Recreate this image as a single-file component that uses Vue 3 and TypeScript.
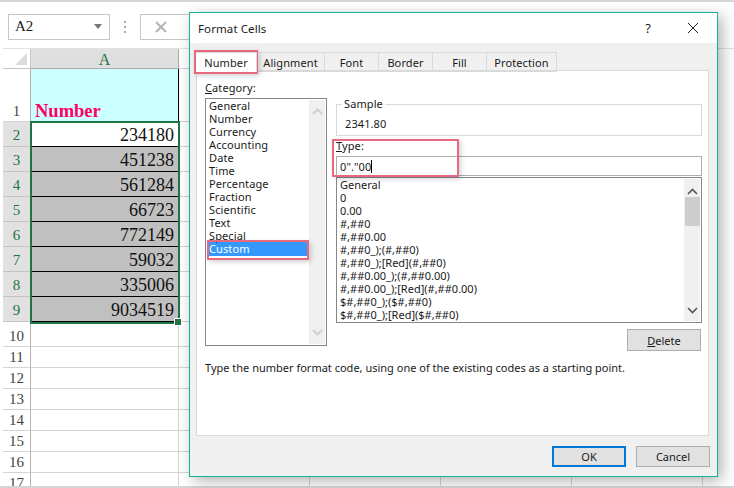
<script setup lang="ts">
interface SheetRow {
  no: number
  value?: string
  height: number
}

const values = ['234180', '451238', '561284', '66723', '772149', '59032', '335006', '9034519']

const rows: SheetRow[] = [
  { no: 1, height: 53 },
  ...values.map((value, i) => ({ no: i + 2, value, height: 25 })),
  { no: 10, height: 25 },
  ...[11, 12, 13, 14, 15, 16, 17].map((no) => ({ no, height: 21 })),
]

const tabs = ['Number', 'Alignment', 'Font', 'Border', 'Fill', 'Protection']
const categories = [
  'General', 'Number', 'Currency', 'Accounting', 'Date', 'Time', 'Percentage',
  'Fraction', 'Scientific', 'Text', 'Special', 'Custom',
]
const formats = [
  'General', '0', '0.00', '#,##0', '#,##0.00', '#,##0_);(#,##0)', '#,##0_);[Red](#,##0)',
  '#,##0.00_);(#,##0.00)', '#,##0.00_);[Red](#,##0.00)', '$#,##0_);($#,##0)', '$#,##0_);[Red]($#,##0)',
]
</script>

<template>
  <div class="page">
    <!-- formula bar -->
    <div class="toolbar">
      <div class="namebox">
        <span>A2</span>
        <i class="caret"></i>
      </div>
      <div class="dots"><b></b><b></b><b></b></div>
      <div class="fx">
        <svg width="12" height="12" viewBox="0 0 12 12"><path d="M1 1l10 10M11 1L1 11" stroke="#b4b4b4" stroke-width="2" /></svg>
      </div>
    </div>

    <!-- sheet -->
    <div class="sheet">
      <div class="grid-row head-row">
        <div class="corner"><i></i></div>
        <div class="col-a">A</div>
        <div v-for="n in 4" :key="n" class="rest"></div>
      </div>
      <div v-for="r in rows" :key="r.no" class="grid-row" :style="{ height: r.height + 'px' }">
        <div class="row-no" :class="{ on: r.value }">{{ r.no }}</div>
        <div class="cell" :class="{ title: r.no === 1, first: r.no === 2, filled: r.no > 2 && r.value }">
          <template v-if="r.no === 1">Number</template>
          <template v-else>{{ r.value }}</template>
        </div>
        <div v-for="n in 4" :key="n" class="rest"></div>
      </div>
      <div class="selection"><i></i></div>
    </div>

    <div class="bottom-line"></div>

    <!-- Format Cells window -->
    <div class="dialog">
      <div class="titlebar">
        <span>Format Cells</span>
        <div class="title-btns">
          <span class="help">?</span>
          <svg width="12" height="12" viewBox="0 0 12 12"><path d="M1 1l10 10M11 1L1 11" stroke="#222" stroke-width="1" fill="none" /></svg>
        </div>
      </div>
      <div class="dlg-body">
        <div class="tabs">
          <div v-for="(t, i) in tabs" :key="t" class="tab" :class="['tab-' + i, { active: i === 0 }]">{{ t }}</div>
        </div>
        <div class="panel">
          <div class="columns">
            <div class="left-col">
              <label><u>C</u>ategory:</label>
              <div class="listbox cat-list">
                <div class="items">
                  <div v-for="c in categories" :key="c" class="item" :class="{ picked: c === 'Custom' }">{{ c }}</div>
                </div>
                <div class="scroll">
                  <svg class="chev" width="11" height="7" viewBox="0 0 11 7"><path d="M1 6l4.5-4.5L10 6" stroke="#d0d0d0" stroke-width="2" fill="none" /></svg>
                  <svg class="chev" width="11" height="7" viewBox="0 0 11 7"><path d="M1 1l4.5 4.5L10 1" stroke="#d0d0d0" stroke-width="2" fill="none" /></svg>
                </div>
              </div>
            </div>
            <div class="right-col">
              <fieldset class="sample">
                <legend>Sample</legend>
                <div>2341.80</div>
              </fieldset>
              <label class="type-label"><u>T</u>ype:</label>
              <div class="type-input">0"."00<i class="cursor"></i></div>
              <div class="listbox fmt-list">
                <div class="items">
                  <div v-for="f in formats" :key="f" class="item">{{ f }}</div>
                </div>
                <div class="scroll">
                  <svg class="chev" width="11" height="7" viewBox="0 0 11 7"><path d="M1 6l4.5-4.5L10 6" stroke="#555" stroke-width="1.6" fill="none" /></svg>
                  <div class="thumb"></div>
                  <svg class="chev" width="11" height="7" viewBox="0 0 11 7"><path d="M1 1l4.5 4.5L10 1" stroke="#555" stroke-width="1.6" fill="none" /></svg>
                </div>
              </div>
              <div class="delete-wrap">
                <button class="btn"><u>D</u>elete</button>
              </div>
            </div>
          </div>
          <p class="hint">Type the number format code, using one of the existing codes as a starting point.</p>
        </div>
        <div class="actions">
          <button class="btn primary">OK</button>
          <button class="btn">Cancel</button>
        </div>
      </div>
      <div class="mark mark-tab"></div>
      <div class="mark mark-type"></div>
      <div class="mark mark-custom"></div>
    </div>
  </div>
</template>

<style>
html,
body {
  margin: 0;
  background: #fff;
}
</style>

<style scoped>
.page {
  position: relative;
  width: 734px;
  height: 488px;
  overflow: hidden;
  background: #fff;
  font-family: "Noto Sans", "Open Sans", sans-serif;
  color: #1a1a1a;
}

.toolbar {
  display: flex;
  align-items: center;
  box-sizing: border-box;
  height: 49px;
  padding: 11px 0 9px 8px;
  border-top: 2px solid #d6d6d6;
}

.namebox {
  box-sizing: border-box;
  display: flex;
  align-items: center;
  justify-content: space-between;
  width: 102px;
  height: 26px;
  padding: 0 7px 0 6px;
  border: 1px solid #c6c6c6;
  font: 15px "Liberation Serif", serif;
}

.caret {
  border: 4px solid transparent;
  border-top: 5px solid #777;
  border-bottom: 0;
}

.dots {
  display: flex;
  flex-direction: column;
  gap: 3px;
  margin: 0 14px;
}

.dots b {
  width: 2px;
  height: 2px;
  background: #a8a8a8;
}

.fx {
  box-sizing: border-box;
  display: flex;
  align-items: center;
  justify-content: center;
  width: 50px;
  height: 26px;
  padding-right: 8px;
  border: 1px solid #c6c6c6;
}

.sheet {
  position: relative;
  margin-left: 3px;
  border-top: 1px solid #e2e2e2;
  margin-top: -1px;
}

.grid-row {
  display: grid;
  grid-template-columns: 28px 148px repeat(4, 131px);
  grid-template-rows: minmax(0, 1fr);
  box-sizing: border-box;
}

.head-row {
  height: 20px;
}

.corner {
  position: relative;
  border-bottom: 1px solid #c6c6c6;
  border-right: 1px solid #c6c6c6;
}

.corner i {
  position: absolute;
  right: 3px;
  bottom: 3px;
  border-style: solid;
  border-width: 0 0 12px 12px;
  border-color: transparent transparent #dcdcdc transparent;
}

.col-a {
  background: #dfdfdf;
  border-right: 1px solid #aaa;
  border-bottom: 1px solid #aaa;
  color: #217346;
  font: 16px/22px "Liberation Serif", serif;
  text-align: center;
  overflow: hidden;
}

.rest {
  box-sizing: border-box;
  border-right: 1px solid #d4d4d4;
  border-bottom: 1px solid #d4d4d4;
}

.row-no {
  box-sizing: border-box;
  display: flex;
  align-items: flex-end;
  justify-content: center;
  border-right: 1px solid #b4b4b4;
  border-bottom: 1px solid #d4d4d4;
  color: #444;
  font: 15px/20px "Liberation Serif", serif;
}

.row-no.on {
  background: #e1e1e1;
  color: #217346;
  line-height: 22px;
  border-bottom-color: #c4c4c4;
}

.cell {
  box-sizing: border-box;
  padding: 0 4px;
  border-right: 1px solid #d4d4d4;
  border-bottom: 1px solid #d4d4d4;
  overflow: hidden;
  text-align: right;
  color: #111;
  font: 18px/27px "Liberation Serif", serif;
}

.cell.first,
.cell.filled {
  border-bottom: 1px solid #000;
  border-right: 1px solid #000;
}

.cell.filled {
  background: #c0c0c0;
}

.cell.title {
  display: flex;
  align-items: flex-end;
  background: #ccffff;
  border-right: 1px solid #000;
  color: #ff0066;
  font-weight: 700;
  font-size: 18.5px;
  line-height: 20px;
  padding-left: 4px;
  text-align: left;
}

.selection {
  position: absolute;
  box-sizing: border-box;
  left: 27px;
  top: 72px;
  width: 150px;
  height: 203px;
  border: 2px solid #217346;
  pointer-events: none;
}

.selection i {
  position: absolute;
  right: -4px;
  bottom: -4px;
  width: 6px;
  height: 6px;
  background: #217346;
  border: 1px solid #fff;
}

.bottom-line {
  position: absolute;
  left: 0;
  right: 0;
  bottom: 0;
  height: 2px;
  background: #d4d4d4;
}

.dialog {
  position: absolute;
  left: 189px;
  top: 12px;
  box-sizing: border-box;
  width: 529px;
  height: 465px;
  display: flex;
  flex-direction: column;
  background: #f0f0f0;
  border: 1px solid #17b29a;
  box-shadow: 4px 4px 14px rgba(0, 0, 0, 0.3);
  font-size: 11px;
  letter-spacing: 0.1px;
}

.titlebar {
  display: flex;
  align-items: center;
  justify-content: space-between;
  height: 30px;
  padding: 0 18px 0 8px;
  background: #fff;
  font-size: 11.5px;
}

.title-btns {
  display: flex;
  align-items: center;
  gap: 36px;
}

.help {
  font-size: 13px;
}

.dlg-body {
  flex: 1;
  display: flex;
  flex-direction: column;
  padding: 9px 8px 9px 6px;
}

.tabs {
  display: flex;
  height: 19px;
  margin-bottom: -1px;
  position: relative;
}

.tab {
  box-sizing: border-box;
  height: 20px;
  border: 1px solid #d9d9d9;
  border-left: 0;
  text-align: center;
  line-height: 19px;
}

.tab.active {
  background: #fff;
  border-bottom-color: #fff;
  position: relative;
  z-index: 1;
}

.tab-0 { width: 61px; }
.tab-1 { width: 68px; }
.tab-2 { width: 54px; }
.tab-3 { width: 54px; }
.tab-4 { width: 54px; }
.tab-5 { width: 70px; }

.panel {
  box-sizing: border-box;
  flex: 1;
  background: #fff;
  border: 1px solid #d9d9d9;
  padding: 10px 6px 0 8px;
  height: 366px;
}

.columns {
  display: flex;
  gap: 9px;
}

.left-col {
  width: 122px;
  flex: none;
}

label {
  display: block;
  height: 13px;
  line-height: 13px;
}

.listbox {
  box-sizing: border-box;
  display: flex;
  justify-content: space-between;
  background: #fff;
  border: 1px solid #828790;
  overflow: hidden;
}

.cat-list {
  height: 248px;
  margin-top: 4px;
}

.items {
  flex: 1;
  padding: 0 0 0 3px;
}

.item {
  height: 13px;
  line-height: 13px;
  white-space: nowrap;
}

.item.picked {
  background: #3399ff;
  color: #fff;
  height: 14px;
}

.scroll {
  display: flex;
  flex-direction: column;
  align-items: center;
  justify-content: space-between;
  box-sizing: border-box;
  width: 16px;
  background: #f0f0f0;
  padding: 8px 0;
  margin: 1px;
}

.right-col {
  flex: 1;
  min-width: 0;
  padding-top: 17px;
}

.sample {
  box-sizing: border-box;
  height: 38px;
  margin: 0;
  padding: 6px 8px 0;
  border: 1px solid #d9d9d9;
  line-height: 16px;
}

.sample legend {
  padding: 0 2px;
  margin-left: -3px;
  line-height: 12px;
}

.type-label {
  margin-top: 3px;
}

.type-input {
  box-sizing: border-box;
  display: flex;
  align-items: center;
  height: 20px;
  margin-top: 4px;
  padding-left: 3px;
  border: 1px solid #abadb3;
}

.cursor {
  width: 1px;
  height: 13px;
  background: #000;
}

.fmt-list {
  height: 146px;
  margin-top: 1px;
  letter-spacing: 0;
}

.fmt-list .scroll {
  justify-content: flex-start;
  position: relative;
  padding: 9px 0 7px;
}

.fmt-list .scroll .chev:last-child {
  margin-top: auto;
}

.thumb {
  width: 15px;
  height: 29px;
  margin-top: 2px;
  background: #cdcdcd;
}

.delete-wrap {
  display: flex;
  justify-content: flex-end;
  margin-top: 6px;
  padding-right: 1px;
}

.delete-wrap .btn {
  height: 22px;
}

.btn {
  box-sizing: border-box;
  width: 74px;
  height: 21px;
  padding: 0;
  background: #e1e1e1;
  border: 1px solid #adadad;
  color: #1a1a1a;
  font: inherit;
  line-height: 17px;
}

.hint {
  margin: 10px 0 0;
  line-height: 13px;
  letter-spacing: 0;
}

.actions {
  display: flex;
  justify-content: flex-end;
  gap: 10px;
  margin-top: 10px;
  margin-right: -1px;
}

.btn.primary {
  border: 2px solid #0078d7;
}

.mark {
  position: absolute;
  box-sizing: border-box;
  border: 2px solid #e8697d;
  box-shadow: 2px 2px 5px rgba(0, 0, 0, 0.18);
  pointer-events: none;
}

.mark-tab {
  left: 4px;
  top: 37px;
  width: 64px;
  height: 24px;
}

.mark-type {
  left: 142px;
  top: 126px;
  width: 127px;
  height: 38px;
}

.mark-custom {
  left: 17px;
  top: 227px;
  width: 102px;
  height: 20px;
}
</style>
